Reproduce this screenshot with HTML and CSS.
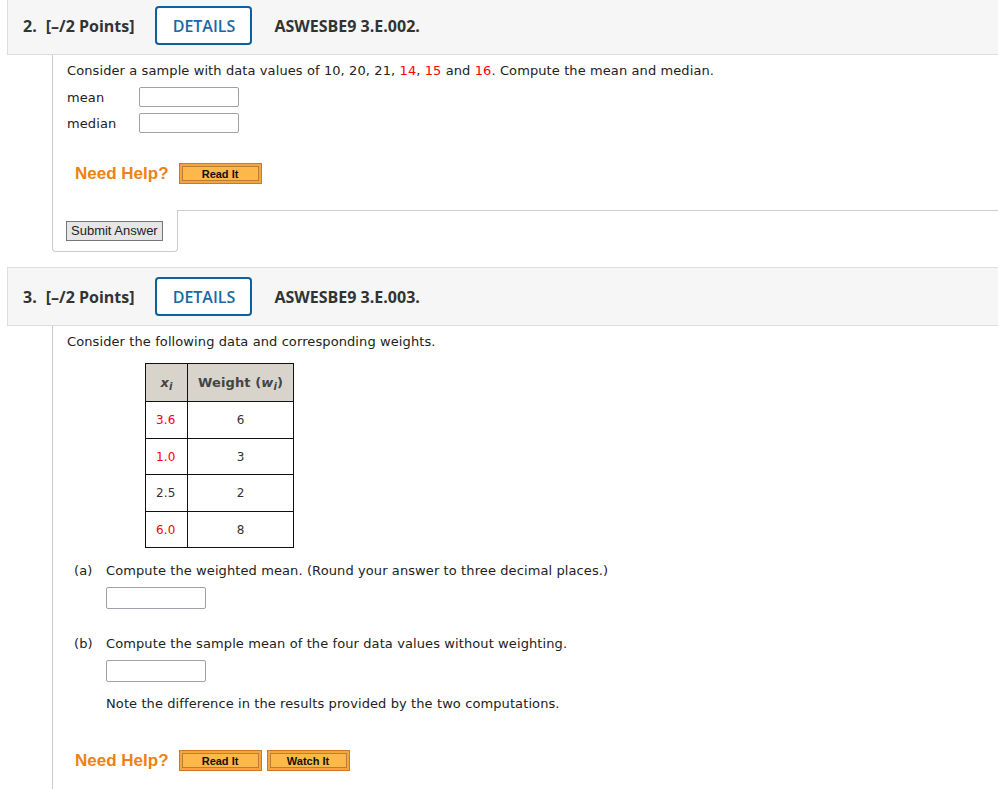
FILE: index.html
```html
<!DOCTYPE html>
<html>
<head>
<meta charset="utf-8">
<link rel="stylesheet" href="styles.css">
</head>
<body>
<div class="page">
  <div class="q-head q-head-first">
    <span class="q-num">2.</span>
    <span class="q-pts">[–/2 Points]</span>
    <span class="details">DETAILS</span>
    <span class="q-code">ASWESBE9 3.E.002.</span>
  </div>
  <div class="q-body">
    <div class="q-content q2">
      <p class="prompt">Consider a sample with data values of 10, 20, 21, <span class="red">14</span>, <span class="red">15</span> and <span class="red">16</span>. Compute the mean and median.</p>
      <div class="field"><span class="field-label">mean</span><span class="inp"></span></div>
      <div class="field"><span class="field-label">median</span><span class="inp"></span></div>
      <div class="help">
        <span class="help-text">Need Help?</span>
        <span class="help-btn">Read It</span>
      </div>
    </div>
    <div class="footer">
      <div class="submit-box"><span class="submit-btn">Submit Answer</span></div>
      <div class="footer-rest"></div>
    </div>
  </div>

  <div class="q-head q-head-next">
    <span class="q-num">3.</span>
    <span class="q-pts">[–/2 Points]</span>
    <span class="details">DETAILS</span>
    <span class="q-code">ASWESBE9 3.E.003.</span>
  </div>
  <div class="q-body">
    <div class="q-content q3">
      <p class="prompt">Consider the following data and corresponding weights.</p>
      <table class="data">
        <colgroup><col class="col1"><col class="col2"></colgroup>
        <thead>
          <tr><th class="c1"><i>x<sub>i</sub></i></th><th class="c2">Weight (<i>w<sub>i</sub></i>)</th></tr>
        </thead>
        <tbody>
          <tr><td class="c1 red">3.6</td><td class="c2">6</td></tr>
          <tr><td class="c1 red">1.0</td><td class="c2">3</td></tr>
          <tr><td class="c1">2.5</td><td class="c2">2</td></tr>
          <tr><td class="c1 red">6.0</td><td class="c2">8</td></tr>
        </tbody>
      </table>
      <div class="part part-a"><span class="part-label">(a)</span><span>Compute the weighted mean. (Round your answer to three decimal places.)</span></div>
      <div class="part-inp"><span class="inp inp-big"></span></div>
      <div class="part part-b"><span class="part-label">(b)</span><span>Compute the sample mean of the four data values without weighting.</span></div>
      <div class="part-inp"><span class="inp inp-big"></span></div>
      <p class="note">Note the difference in the results provided by the two computations.</p>
      <div class="help help-last">
        <span class="help-text">Need Help?</span>
        <span class="help-btn">Read It</span>
        <span class="help-btn">Watch It</span>
      </div>
    </div>
  </div>
</div>
</body>
</html>
```

FILE: styles.css
```css
html, body {
  margin: 0;
  padding: 0;
  background: #fff;
}
body {
  font-family: "DejaVu Sans", Verdana, sans-serif;
  font-size: 13px;
  letter-spacing: 0.1px;
  color: #222;
  overflow: hidden;
}
.page {
  margin-left: 7px;
}
.q-head {
  display: flex;
  align-items: center;
  background: #f6f6f6;
  border-left: 1px solid #ddd;
  border-bottom: 1px solid #ddd;
  padding: 9px 0 9px 15px;
  font-family: "Open Sans", "Liberation Sans", sans-serif;
  color: #333;
  font-size: 16px;
  font-weight: 700;
  letter-spacing: 0;
}
.q-head-first {
  padding-top: 6px;
}
.q-head-next {
  border-top: 1px solid #ddd;
  margin-top: 15px;
}
.q-num {
  margin-right: 9px;
}
.q-pts {
  margin-right: 21px;
}
.details {
  box-sizing: border-box;
  width: 97px;
  height: 39px;
  border: 2px solid #11609c;
  border-radius: 4px;
  color: #1a68a3;
  font-size: 16px;
  font-weight: 600;
  display: flex;
  align-items: center;
  justify-content: center;
  margin-right: 22px;
  background: #fff;
}
.q-body {
  margin-left: 45px;
}
.q-content {
  border-left: 1px solid #ccc;
  padding: 8px 0 0 14px;
}
.q2 {
  padding-bottom: 26px;
}
.prompt {
  margin: 0;
  line-height: 16px;
}
.red {
  color: #f00;
}
.field {
  display: flex;
  align-items: center;
  height: 20px;
  margin-top: 6px;
}
.prompt + .field {
  margin-top: 8px;
}
.field-label {
  width: 72px;
}
.inp {
  display: inline-block;
  box-sizing: border-box;
  width: 100px;
  height: 20px;
  border: 1px solid #a0a0a8;
  border-radius: 2px;
  background: #fff;
}
.inp-big {
  height: 22px;
}
.help {
  display: flex;
  align-items: center;
  margin-top: 30px;
  padding-left: 8px;
}
.help-text {
  font-family: "Liberation Sans", Arial, sans-serif;
  font-weight: 700;
  font-size: 17px;
  letter-spacing: 0;
  color: #ec8212;
  margin-right: 10px;
}
.help-btn {
  box-sizing: border-box;
  width: 83px;
  height: 21px;
  display: flex;
  align-items: center;
  justify-content: center;
  font-family: "Liberation Sans", Arial, sans-serif;
  font-weight: 700;
  font-size: 11px;
  letter-spacing: 0;
  color: #111;
  background: #fcb848;
  border: 1px solid #c9792a;
  box-shadow: inset 0 0 0 2px #f8a43c, inset 0 0 0 3px #bf7d33;
  margin-right: 5px;
}
.footer {
  display: flex;
}
.submit-box {
  box-sizing: border-box;
  width: 126px;
  border: 1px solid #ccc;
  border-top: none;
  border-radius: 0 0 4px 4px;
  padding: 11px 0 10px 13px;
}
.submit-btn {
  display: inline-block;
  box-sizing: border-box;
  height: 20px;
  padding: 0 4px;
  line-height: 18px;
  font-family: "Liberation Sans", Arial, sans-serif;
  font-size: 13px;
  letter-spacing: 0;
  color: #222;
  background: #e6e6e6;
  border: 1px solid #767676;
}
.footer-rest {
  flex: 1;
  border-top: 1px solid #ccc;
}
.q3 {
  padding-bottom: 40px;
}
.data {
  border-collapse: collapse;
  table-layout: fixed;
  margin: 13px 0 0 78px;
  width: 148px;
}
.col1 {
  width: 42px;
}
.col2 {
  width: 106px;
}
.data th, .data td {
  border: 1px solid #111;
  padding: 0;
}
.data th {
  background: #d8d4cb;
  height: 37px;
  color: #444;
  font-weight: 700;
  font-size: 13px;
}
.data td {
  height: 36px;
  font-size: 12px;
  color: #333;
}
.data tbody tr:nth-child(2) td,
.data tbody tr:nth-child(4) td {
  height: 35px;
}
.data td.red {
  color: #f00;
}
.data td.c1 {
  padding-left: 10px;
  text-align: left;
}
.data td.c2, .data th.c2 {
  text-align: center;
}
.data sub {
  font-size: 10px;
  vertical-align: -3px;
  line-height: 0;
}
.part {
  display: flex;
  line-height: 16px;
  padding-left: 7px;
}
.part-a {
  margin-top: 15px;
}
.part-b {
  margin-top: 27px;
}
.part-label {
  width: 32px;
}
.part-inp {
  padding-left: 39px;
  margin-top: 8px;
  height: 22px;
}
.note {
  margin: 14px 0 0 39px;
  line-height: 16px;
}
.help-last {
  margin-top: 38px;
}
```
